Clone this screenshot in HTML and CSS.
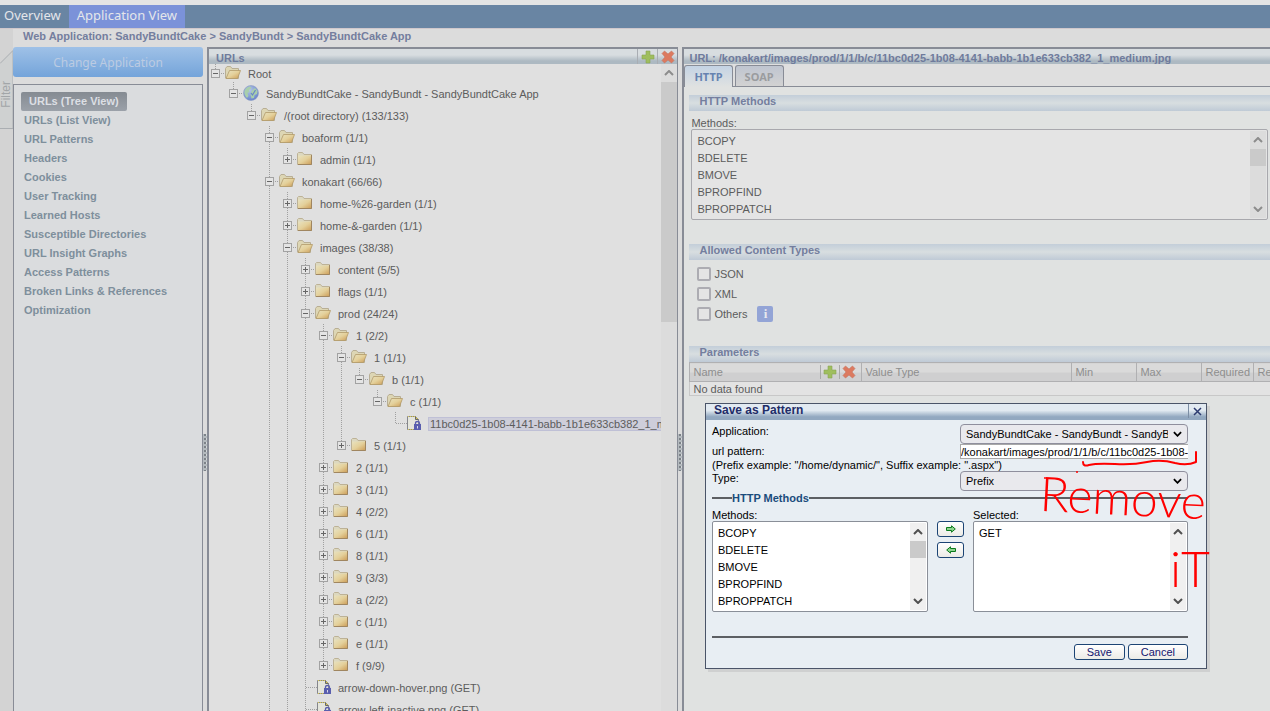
FILE: index.html
```
<!DOCTYPE html>
<html lang="en">
  <head>
    <meta charset="utf-8">
    <meta name="viewport" content="width=device-width, initial-scale=1.0">
    <title>Application View</title>
    <link rel="stylesheet" href="styles.css">
  </head>
  <body>
    <!-- shared icons -->
    <svg class="defs" width="0" height="0" aria-hidden="true">
      <defs>
        <linearGradient id="gold" x1="0" y1="0" x2="1" y2="1">
          <stop offset="0" stop-color="#e8e2c0"/>
          <stop offset=".5" stop-color="#e4d09a"/>
          <stop offset="1" stop-color="#cc9c56"/>
        </linearGradient>
        <radialGradient id="sea" cx=".4" cy=".3" r=".8">
          <stop offset="0" stop-color="#b4c6e6"/>
          <stop offset="1" stop-color="#5f7cc8"/>
        </radialGradient>
        <symbol id="closed" viewBox="0 0 16 16">
          <path d="M.5 4V2.500L1.500 1.500H5.500L7 3.500H14.500V13.500H.5Z" fill="#dcd8c0" stroke="#bdb296"/>
          <path d="M1 4.500H14.500V13.500H1Z" fill="url(#gold)"/>
          <path d="M14.500 4V13.500H1" fill="none" stroke="#a08660"/>
        </symbol>
        <symbol id="open" viewBox="0 0 16 16">
          <path d="M.5 13V3.500L2 1.500H5.500L7 3.500H13.500V13.500H1Z" fill="#ddd6b4" stroke="#b8ae94"/>
          <path d="M1 13.500L4.500 5.500H15.500L12.500 13.500Z" fill="url(#gold)" stroke="#b39a6a" stroke-width=".8"/>
        </symbol>
        <symbol id="globe" viewBox="0 0 16 16">
          <circle cx="8" cy="8" r="7.500" fill="url(#sea)" stroke="#8a9ac4" stroke-width=".6"/>
          <path d="M1.500 6Q3 2 7 1.500L8.500 3L6 5L6.500 7L4.500 8L5.500 11L4 13Q1 10 1.500 6Z" fill="#a9cfac"/>
          <path d="M8.500 6L12 3L14.500 6L14 9L11.500 10L11 13L8.500 13.500L7.500 9.500Z" fill="#a9cfac"/>
          <path d="M8 8L9.500 10L12.500 5" fill="none" stroke="#6885c8" stroke-width="1.200"/>
        </symbol>
        <symbol id="page" viewBox="0 0 16 16">
          <path d="M.5 1.500H8.500L11.500 4.500V14.500H.5Z" fill="#e4e5dc" stroke="#85868c"/>
          <path d="M1 1.500H8M1 14.500H8" stroke="#d8c650" stroke-dasharray="1 1"/>
          <path d="M8.500 1.500V4.500H11.500" fill="#d8c650" stroke="#66676a"/>
          <path d="M8.500 9V8Q8.500 6.500 10.500 6.500T12.500 8V9" fill="none" stroke="#5a5fae" stroke-width="1.300"/>
          <path d="M7 9H14V15H7Z" fill="#5a5fae"/>
          <path d="M10 11H11V13.500H10Z" fill="#d8d8e8"/>
        </symbol>
        <symbol id="plus" viewBox="0 0 14 14">
          <path d="M5 1H9V5H13V9H9V13H5V9H1V5H5Z" fill="#9fbe5e" stroke="#8aa455" stroke-width=".6"/>
        </symbol>
        <symbol id="cross" viewBox="0 0 14 14">
          <path d="M3.500 1L7 4L10.500 1L13 3.500L10 7L13 10.500L10.500 13L7 10L3.500 13L1 10.500L4 7L1 3.500Z" fill="#dc7a60" stroke="#c4735e" stroke-width=".6"/>
        </symbol>
        <symbol id="up" viewBox="0 0 10 6">
          <path d="M1 5L5 1L9 5" fill="none" stroke="currentColor" stroke-width="2"/>
        </symbol>
        <symbol id="down" viewBox="0 0 10 6">
          <path d="M1 1L5 5L9 1" fill="none" stroke="currentColor" stroke-width="2"/>
        </symbol>
        <symbol id="arrow" viewBox="0 0 10 8">
          <path d="M.5 2.500H5.500V.8L9.300 4L5.500 7.200V5.500H.5Z" fill="#8fd48f" stroke="#0b7a1c"/>
        </symbol>
      </defs>
    </svg>

    <nav class="topnav">
      <a href="#overview">Overview</a>
      <a href="#application" class="active">Application View</a>
    </nav>
    <div class="workspace">
      <button class="filter" type="button">
        <svg viewBox="0 0 13 79" aria-hidden="true"><path d="M0 13.500L13 .5V78.500H0" fill="#cfd1d1" stroke="#aaaeb2"/></svg>
        <span>Filter</span>
      </button>
      <div class="content">
        <div class="crumbs">Web Application: SandyBundtCake &gt; SandyBundt &gt; SandyBundtCake App</div>
        <div class="columns">
          <aside class="side">
            <button class="change" type="button">Change Application</button>
            <ul class="menu">
              <li><a href="#tree" class="active">URLs (Tree View)</a></li>
              <li><a href="#list">URLs (List View)</a></li>
              <li><a href="#patterns">URL Patterns</a></li>
              <li><a href="#headers">Headers</a></li>
              <li><a href="#cookies">Cookies</a></li>
              <li><a href="#tracking">User Tracking</a></li>
              <li><a href="#hosts">Learned Hosts</a></li>
              <li><a href="#directories">Susceptible Directories</a></li>
              <li><a href="#graphs">URL Insight Graphs</a></li>
              <li><a href="#access">Access Patterns</a></li>
              <li><a href="#broken">Broken Links &amp; References</a></li>
              <li><a href="#optimization">Optimization</a></li>
            </ul>
          </aside>
          <div class="splitter"><i></i></div>

          <section class="panel urls">
            <div class="panel-head">
              <h2>URLs</h2>
              <button type="button" aria-label="Add"><svg><use href="#plus"/></svg></button>
              <button type="button" aria-label="Delete"><svg><use href="#cross"/></svg></button>
            </div>
            <div class="scroller">
              <div class="tree" id="tree"></div>
              <div class="bar">
                <svg><use href="#up"/></svg>
                <div class="thumb"></div>
              </div>
            </div>
          </section>
          <div class="splitter"><i></i></div>

          <section class="panel detail">
            <div class="panel-head">
              <h2>URL: /konakart/images/prod/1/1/b/c/11bc0d25-1b08-4141-babb-1b1e633cb382_1_medium.jpg</h2>
            </div>
            <div class="tabs">
              <button type="button" class="active">HTTP</button>
              <button type="button">SOAP</button>
            </div>
            <div class="detail-body">
              <h3>HTTP Methods</h3>
              <div class="methods">
                <label for="methods">Methods:</label>
                <div class="listbox">
                  <select id="methods" size="5" multiple>
                    <option>BCOPY</option>
                    <option>BDELETE</option>
                    <option>BMOVE</option>
                    <option>BPROPFIND</option>
                    <option>BPROPPATCH</option>
                  </select>
                  <div class="bar">
                    <svg><use href="#up"/></svg>
                    <div class="thumb"></div>
                    <svg class="end"><use href="#down"/></svg>
                  </div>
                </div>
              </div>
              <h3>Allowed Content Types</h3>
              <div class="types">
                <label><input type="checkbox"> JSON</label>
                <label><input type="checkbox"> XML</label>
                <label><input type="checkbox"> Others <span class="info">i</span></label>
              </div>
              <h3>Parameters</h3>
              <table class="params">
                <colgroup>
                  <col class="c-name"><col class="c-value"><col class="c-num"><col class="c-num"><col class="c-req"><col class="c-last">
                </colgroup>
                <thead>
                  <tr>
                    <th>
                      <div class="name-head">
                        <span>Name</span>
                        <button type="button" aria-label="Add parameter"><svg><use href="#plus"/></svg></button>
                        <button type="button" aria-label="Delete parameter"><svg><use href="#cross"/></svg></button>
                      </div>
                    </th>
                    <th>Value Type</th>
                    <th>Min</th>
                    <th>Max</th>
                    <th>Required</th>
                    <th>Re</th>
                  </tr>
                </thead>
                <tbody>
                  <tr><td colspan="6">No data found</td></tr>
                </tbody>
              </table>
            </div>
          </section>
        </div>
      </div>
    </div>

    <div class="dialog" role="dialog" aria-labelledby="dialogTitle">
      <div class="dialog-head">
        <h2 id="dialogTitle">Save as Pattern</h2>
        <button type="button" aria-label="Close"><svg viewBox="0 0 9 9"><path d="M1 1L8 8M8 1L1 8" stroke="#2c3b70" stroke-width="1.500"/></svg></button>
      </div>
      <form class="dialog-body">
        <div class="fields">
          <label for="app">Application:</label>
          <div class="drop">
            <select id="app"><option>SandyBundtCake - SandyBundt - SandyBundtCake App</option></select>
            <svg><use href="#down"/></svg>
          </div>
          <label for="pattern">url pattern:</label>
          <input id="pattern" type="text" value="/konakart/images/prod/1/1/b/c/11bc0d25-1b08-4141-babb-1b1e633cb382_1_medium.jpg">
          <p>(Prefix example: "/home/dynamic/", Suffix example: ".aspx")</p>
          <label for="type">Type:</label>
          <div class="drop">
            <select id="type"><option>Prefix</option></select>
            <svg><use href="#down"/></svg>
          </div>
        </div>
        <h3 class="rule">HTTP Methods</h3>
        <div class="transfer">
          <div>
            <label for="available">Methods:</label>
            <div class="listbox">
              <select id="available" size="5" multiple>
                <option>BCOPY</option>
                <option>BDELETE</option>
                <option>BMOVE</option>
                <option>BPROPFIND</option>
                <option>BPROPPATCH</option>
              </select>
              <div class="bar">
                <svg><use href="#up"/></svg>
                <div class="thumb"></div>
                <svg class="end"><use href="#down"/></svg>
              </div>
            </div>
          </div>
          <div class="moves">
            <button type="button" class="btn" aria-label="Add method"><svg><use href="#arrow"/></svg></button>
            <button type="button" class="btn back" aria-label="Remove method"><svg><use href="#arrow"/></svg></button>
          </div>
          <div>
            <label for="selected">Selected:</label>
            <div class="listbox">
              <select id="selected" size="5" multiple>
                <option>GET</option>
              </select>
              <div class="bar">
                <svg><use href="#up"/></svg>
                <svg class="end"><use href="#down"/></svg>
              </div>
            </div>
          </div>
        </div>
        <div class="actions">
          <button type="button" class="btn">Save</button>
          <button type="button" class="btn">Cancel</button>
        </div>
      </form>
      <!-- red pen notes -->
      <div class="notes">
        <svg viewBox="0 0 160 36" aria-hidden="true">
          <path d="M42 12Q42 17 48 15Q56 13 74 14T106 12T134 13Q146 16 155 12V2" fill="none" stroke="#f00" stroke-width="2" stroke-linecap="round" stroke-linejoin="round"/>
          <circle cx="36" cy="22" r="1" fill="#f00"/>
          <circle cx="4" cy="28" r="1" fill="#f00"/>
        </svg>
        <span class="remove">Remove</span>
        <span class="it">iT</span>
      </div>
    </div>

    <script>
      // leaf = file with a lock, kids = expanded folder
      const leaf = (name, selected) => ({ name, leaf: true, selected });
      const dir = (name, kids) => ({ name, kids });
      const root = dir('Root', [
        { name: 'SandyBundtCake - SandyBundt - SandyBundtCake App', icon: 'globe', kids: [
          dir('/(root directory) (133/133)', [
            dir('boaform (1/1)', [dir('admin (1/1)')]),
            dir('konakart (66/66)', [
              dir('home-%26-garden (1/1)'),
              dir('home-&-garden (1/1)'),
              dir('images (38/38)', [
                dir('content (5/5)'),
                dir('flags (1/1)'),
                dir('prod (24/24)', [
                  dir('1 (2/2)', [
                    dir('1 (1/1)', [
                      dir('b (1/1)', [
                        dir('c (1/1)', [leaf('11bc0d25-1b08-4141-babb-1b1e633cb382_1_medium', true)])
                      ])
                    ]),
                    dir('5 (1/1)')
                  ]),
                  dir('2 (1/1)'),
                  dir('3 (1/1)'),
                  dir('4 (2/2)'),
                  dir('6 (1/1)'),
                  dir('8 (1/1)'),
                  dir('9 (3/3)'),
                  dir('a (2/2)'),
                  dir('c (1/1)'),
                  dir('e (1/1)'),
                  dir('f (9/9)')
                ]),
                leaf('arrow-down-hover.png (GET)'),
                leaf('arrow-left-inactive.png (GET)'),
                leaf('arrow-left.png (GET)')
              ]),
              dir('script (2/2)')
            ]),
            dir('styles (3/3)')
          ])
        ]}
      ]);

      function renderNode(node) {
        const li = document.createElement('li');
        const row = document.createElement('div');
        row.className = 'row' + (node.leaf ? ' leaf' : '');
        const icon = node.leaf ? 'page' : node.icon || (node.kids ? 'open' : 'closed');
        const toggle = node.leaf ? '' : `<button type="button" class="toggle${node.kids ? '' : ' plus'}" aria-label="Toggle"></button>`;
        row.innerHTML = `${toggle}<i class="dots"></i><svg class="icon"><use href="#${icon}"/></svg><span class="name"></span>`;
        const name = row.querySelector('.name');
        name.textContent = node.name;
        if (node.selected) name.classList.add('selected');
        li.appendChild(row);
        if (node.kids) li.appendChild(renderList(node.kids));
        return li;
      }
      function renderList(nodes) {
        const ul = document.createElement('ul');
        nodes.forEach(n => ul.appendChild(renderNode(n)));
        return ul;
      }
      document.querySelector('#tree').appendChild(renderList([root]));
    </script>
  </body>
</html>
```
FILE: styles.css
```
* {
  box-sizing: border-box;
}
body {
  margin: 0;
  height: 100vh;
  overflow: hidden;
  display: flex;
  flex-direction: column;
  padding-top: 5px;
  background: #e4e4e4;
  color: #5c5c5c;
  font-family: "Liberation Sans", Arial, sans-serif;
  font-size: 11px;
}
button, input, select {
  font: inherit;
  color: inherit;
  margin: 0;
}
button {
  border: none;
  padding: 0;
  background: none;
  cursor: pointer;
}
h2, h3, p, ul {
  margin: 0;
  padding: 0;
  font-size: 11px;
}
ul {
  list-style: none;
}
svg {
  display: block;
  flex: none;
}
.defs {
  position: absolute;
}

/* Top navigation */
.topnav {
  flex: none;
  display: flex;
  height: 23px;
  background: #6985a3;
  font-family: "Noto Sans", sans-serif;
  font-size: 13px;
  line-height: 21px;
}
.topnav a {
  padding: 0 8px;
  color: #e4e6ea;
  text-decoration: none;
}
.topnav a:first-child {
  padding-left: 4px;
}
.topnav .active {
  background: #7b92d9;
}

.workspace {
  flex: 1;
  min-height: 0;
  display: flex;
  background: #dcdcdc;
  border-top: 1px solid #d0c8cc;
}
.filter {
  width: 13px;
  flex: none;
  display: flex;
  flex-direction: column;
  align-items: center;
  justify-content: flex-start;
  position: relative;
  padding-top: 52px;
  background: #d3d3d3;
  color: #a2a6a8;
}
.filter svg {
  position: absolute;
  top: 21px;
  left: 0;
  width: 13px;
  height: 79px;
}
.filter span {
  position: relative;
  writing-mode: vertical-rl;
  transform: rotate(180deg);
  font-size: 12px;
  line-height: 13px;
}
.content {
  flex: 1;
  min-width: 0;
  display: flex;
  flex-direction: column;
}
.crumbs {
  flex: none;
  height: 18px;
  padding-left: 10px;
  line-height: 15px;
  font-weight: bold;
  color: #747e9e;
}
.columns {
  flex: 1;
  min-height: 0;
  display: flex;
}

/* Left menu */
.side {
  width: 190px;
  flex: none;
  display: flex;
  flex-direction: column;
}
.change {
  flex: none;
  height: 30px;
  margin-bottom: 7px;
  border-radius: 3px;
  background: linear-gradient(#9fc1e7, #74a4da);
  color: #bccbe2;
  font-family: "Noto Sans", sans-serif;
  font-size: 12px;
}
.menu {
  flex: 1;
  padding: 7px 7px 0;
  border: 1px solid #888c96;
  border-bottom: none;
  background: #dadcde;
}
.menu li {
  height: 19px;
}
.menu a {
  display: inline-block;
  padding: 0 3px;
  line-height: 19px;
  color: #7e8f9c;
  font-weight: bold;
  text-decoration: none;
}
.menu .active {
  padding: 0 8px;
  border-radius: 2px;
  background: linear-gradient(#858b92, #9ba1a9);
  color: #dcdfe4;
}
.splitter {
  width: 4px;
  flex: none;
  background: #dcdcdc;
  padding-top: 387px;
}
.splitter i {
  display: block;
  height: 37px;
  background: repeating-linear-gradient(transparent 0 2px, #b4babe 2px 4px), linear-gradient(90deg, #b4babe 1px, #7c8288 1px 3px, #d4d8da 3px);
}

/* Panels */
.panel {
  min-width: 0;
  display: flex;
  flex-direction: column;
  border: 1px solid #888c96;
  border-top-width: 2px;
  border-left-width: 2px;
  border-bottom: none;
}
.urls {
  flex: 4;
  background: #e0e0e0;
}
.detail {
  flex: 5;
  border-right: none;
  background: #dfdfdf;
}
.panel-head {
  flex: none;
  display: flex;
  height: 15px;
  overflow: hidden;
  background: linear-gradient(#d8dde0 0 40%, #adb9c2 80%);
}
.panel-head h2 {
  flex: 1;
  padding-left: 7px;
  line-height: 18px;
  white-space: nowrap;
  color: #6f7b9c;
}
.detail .panel-head h2 {
  padding-left: 5px;
}
.panel-head button {
  width: 20px;
  padding-left: 3px;
  border-left: 1px solid #a9adb3;
}
.panel-head svg, .name-head svg {
  width: 14px;
  height: 14px;
}

/* Tree */
.scroller {
  flex: 1;
  min-height: 0;
  display: flex;
}
.tree {
  flex: 1;
  min-width: 0;
  overflow: hidden;
  padding-left: 2px;
}
.tree ul ul {
  margin-left: 18px;
}
.tree li {
  background: repeating-linear-gradient(#a0a0a0 0 1px, transparent 1px 2px) 4px 0 / 1px 100% no-repeat;
}
.tree li:last-child {
  background-size: 1px 11px;
}
.row {
  display: flex;
  align-items: center;
  height: 22px;
}
.tree > ul > li > .row {
  height: 18px;
}
.toggle {
  width: 9px;
  height: 9px;
  flex: none;
  border: 1px solid #a2a2a2;
  background: linear-gradient(#666, #666) center / 5px 1px no-repeat #e4e4e4;
}
.toggle.plus {
  background: linear-gradient(#666, #666) center / 5px 1px no-repeat, linear-gradient(#666, #666) center / 1px 5px no-repeat #e4e4e4;
}
.dots {
  width: 5px;
  height: 1px;
  flex: none;
  background: repeating-linear-gradient(90deg, transparent 0 1px, #a0a0a0 1px 2px);
}
.leaf .dots {
  width: 12px;
  margin-left: 4px;
}
.icon {
  width: 16px;
  height: 16px;
  margin-right: 7px;
}
.leaf .icon {
  margin-right: 5px;
}
.name {
  padding-top: 2px;
  white-space: nowrap;
}
.name.selected {
  padding: 0 1px;
  border: 1px solid #bfc0d6;
  background: #ceceda;
  margin-top: 2px;
}

/* Drawn scrollbars */
.bar {
  width: 16px;
  flex: none;
  display: flex;
  flex-direction: column;
  align-items: center;
  background: #dcdcdc;
  color: #8c8c8c;
}
.bar svg {
  width: 10px;
  height: 6px;
  margin: 6px 0;
}
.bar .end {
  margin-top: auto;
}
.thumb {
  width: 100%;
  height: 17px;
  background: #cacaca;
}
.urls .thumb {
  height: 240px;
}

/* URL detail */
.tabs {
  flex: none;
  display: flex;
  gap: 2px;
  height: 23px;
  padding: 1px 0 0;
  border-bottom: 1px solid #888c96;
}
.tabs button {
  height: 21px;
  padding: 0 9px;
  border: 1px solid #888c96;
  border-bottom: none;
  border-radius: 3px 3px 0 0;
  background: linear-gradient(#bfc5d0, #d2d2d2);
  color: #9a9c9f;
  font: bold 11px "Noto Sans", sans-serif;
}
.tabs .active {
  height: 22px;
  background: linear-gradient(#c4d3e4, #e0e2e1);
  color: #6683b0;
}
.detail-body {
  flex: 1;
  min-height: 0;
  overflow: hidden;
  padding: 8px 0 0 5px;
  background: #e0e2e1;
}
.detail-body h3 {
  height: 16px;
  padding-left: 10px;
  line-height: 13px;
  background: linear-gradient(#c3ced9, #d8dee0 50%, #bfcad6);
  color: #747e9e;
}
.methods {
  padding: 6px 2px 24px;
}
label {
  display: block;
  line-height: 12px;
}
.listbox {
  display: flex;
  height: 91px;
  padding: 1px;
  border: 1px solid #a8a8ad;
  border-radius: 2px;
  background: #e4e4e4;
}
.listbox select {
  flex: 1;
  min-width: 0;
  padding: 2px 0;
  border: none;
  border-radius: 0;
  outline: none;
  background: none;
  overflow: hidden;
  scrollbar-width: none;
}
.listbox option {
  height: 17px;
  min-height: 17px;
  padding: 2px 4px;
}
.types {
  height: 86px;
  padding: 4px 8px;
}
.types label {
  display: flex;
  align-items: center;
  gap: 3px;
  height: 20px;
}
.types input {
  appearance: none;
  width: 14px;
  height: 14px;
  border: 2px solid #acacb2;
  border-radius: 2px;
  background: #e4e4e4;
}
.info {
  width: 16px;
  height: 16px;
  margin-left: 7px;
  border-radius: 2px;
  background: #93a4d6;
  color: #e8e8ee;
  text-align: center;
  font: bold 13px/16px "Liberation Serif", serif;
}
.params {
  width: 664px;
  table-layout: fixed;
  border-collapse: collapse;
}
.c-name { width: 172px; }
.c-value { width: 210px; }
.c-num { width: 65px; }
.c-req { width: 52px; }
.params th {
  height: 19px;
  padding: 0 3px;
  border: 1px solid #b0b0b2;
  background: linear-gradient(#dadada 50%, #cfcfd0 50%);
  color: #8e8e8e;
  font-weight: normal;
  text-align: left;
}
.params td {
  height: 14px;
  padding: 0 3px;
  border: 1px solid #c8c8c8;
  background: #e3e3e3;
}
.name-head {
  display: flex;
  align-items: center;
}
.name-head span {
  flex: 1;
}
.name-head button {
  width: 19px;
  padding-left: 2px;
  border-left: 1px solid #a9a9a9;
}

/* Save as Pattern dialog, floats over the page */
.dialog {
  position: absolute;
  top: 403px;
  right: 63px;
  width: 502px;
  border: 1px solid #4a5468;
  background: #e8eef3;
  color: #000;
  box-shadow: 3px 3px 0 #cfd0d0;
}
.dialog-head {
  display: flex;
  height: 16px;
  background: linear-gradient(#e2eaf1 40%, #92a8c0 80%);
}
.dialog-head h2 {
  flex: 1;
  padding-left: 8px;
  line-height: 12px;
  font-size: 12px;
  color: #1f2d68;
}
.dialog-head button {
  width: 18px;
  height: 14px;
  padding-left: 4px;
  border-left: 1px solid #7c8ea4;
}
.dialog-head svg {
  width: 9px;
  height: 9px;
}
.dialog-body {
  padding: 4px 18px 8px 6px;
}
.fields {
  display: grid;
  grid-template-columns: 248px 1fr;
  grid-template-rows: 20px 15px 12px 20px;
}
.fields label {
  padding-top: 1px;
}
.fields p {
  grid-column: 1 / 3;
  line-height: 12px;
}
.fields input {
  min-width: 0;
  height: 15px;
  padding: 0;
  border: 1px solid #a8a8a8;
  border-right: none;
  background: #fff;
}
.drop {
  position: relative;
}
.drop select {
  appearance: none;
  display: block;
  width: 100%;
  height: 20px;
  padding: 0 19px 0 5px;
  border: 1px solid #8f8f9d;
  border-radius: 4px;
  background: #e9e9ed;
}
.drop svg {
  position: absolute;
  top: 7px;
  right: 6px;
  width: 9px;
  height: 6px;
  pointer-events: none;
}
.rule {
  display: flex;
  align-items: center;
  height: 14px;
  line-height: 12px;
  color: #1a4c7c;
}
.rule::before, .rule::after {
  content: "";
  width: 20px;
  height: 2px;
  background: #5c5f63;
}
.rule::after {
  flex: 1;
}
.transfer {
  display: grid;
  grid-template-columns: 216px 27px 1fr;
  gap: 9px;
  padding: 4px 0 24px;
}
.dialog .listbox {
  border-color: #8a8f98;
  background: #fff;
}
.dialog .bar {
  background: #f0f0f0;
  color: #505050;
}
.moves {
  display: flex;
  flex-direction: column;
  gap: 5px;
  padding-top: 12px;
}
.btn {
  height: 16px;
  border: 1px solid #1c4474;
  border-radius: 3px;
  background: linear-gradient(#fff, #ecebe6);
  color: #14146e;
}
.moves svg {
  width: 10px;
  height: 8px;
  margin: 0 auto;
}
.back svg {
  transform: scaleX(-1);
}
.actions {
  display: flex;
  justify-content: flex-end;
  gap: 3px;
  padding-top: 6px;
  border-top: 2px solid #5c5f63;
}
.actions .btn {
  padding: 0 12px;
}

/* Pen notes drawn over the dialog */
.notes {
  position: absolute;
  inset: 0;
  pointer-events: none;
  color: #f00;
  font-family: Lato, sans-serif;
}
.notes svg {
  position: absolute;
  top: 46px;
  left: 335px;
  width: 160px;
  height: 36px;
}
.remove {
  position: absolute;
  top: 68px;
  left: 334px;
  font-size: 48px;
  font-weight: 300;
  line-height: 50px;
  transform: rotate(3deg);
}
.it {
  position: absolute;
  top: 139px;
  left: 464px;
  font-size: 50px;
  font-weight: 300;
  line-height: 50px;
}
```
